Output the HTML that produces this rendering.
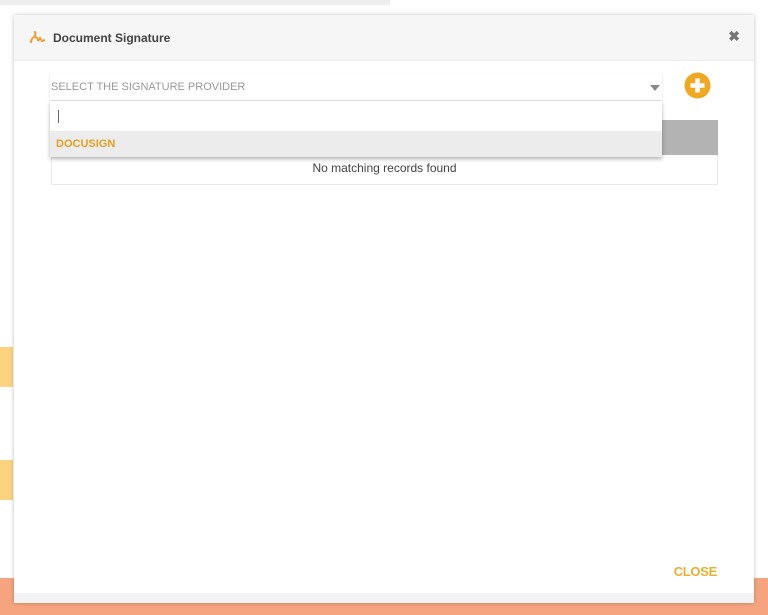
<!DOCTYPE html>
<html><head><style>
body{margin:0;width:768px;height:615px;position:relative;overflow:hidden;background:#fff;font-family:"Liberation Sans",sans-serif}
.bg1{position:absolute;left:0;top:0;width:390px;height:5px;background:#eee}
.band{position:absolute;left:0;top:578px;width:768px;height:37px;background:#f6a47f}
.y1{position:absolute;left:0;top:347px;width:13px;height:40px;background:#fbd27e}
.y2{position:absolute;left:0;top:460px;width:13px;height:40px;background:#fbd27e}
.modal{position:absolute;left:14px;top:15px;width:740px;height:588px;background:#fff;box-shadow:0 0 4px rgba(0,0,0,.25);border-radius:2px}
.hdr{height:45px;background:#f6f6f6;border-bottom:1px solid #eee;position:relative}
.hdr .t{position:absolute;left:39px;top:16px;font-size:12px;font-weight:bold;color:#444}
.hdr .x{position:absolute;right:14px;top:13px;font-size:14px;font-weight:bold;color:#777}
.foot{position:absolute;left:0;bottom:0;width:740px;height:10px;background:#f2f2f2}
.sel{position:absolute;left:36px;top:58px;width:612px;height:27px;background:#fff;box-shadow:0 1px 2px rgba(0,0,0,.15)}
.sel span{position:absolute;left:1px;top:8px;font-size:11px;color:#999}
.arr{position:absolute;right:2px;top:12px;width:0;height:0;border-left:5px solid transparent;border-right:5px solid transparent;border-top:6px solid #888}
.dd{position:absolute;left:36px;top:86px;width:612px;height:56px;background:#fff;box-shadow:0 2px 4px rgba(0,0,0,.3);z-index:2}
.dd .cur{position:absolute;left:8px;top:9px;width:1px;height:13px;background:#666}
.dd .opt{position:absolute;left:0;top:30px;width:612px;height:26px;background:#ececec;color:#e8a020;font-size:11px;font-weight:bold}
.dd .opt span{position:absolute;left:6px;top:7px}
.gray{position:absolute;left:640px;top:105px;width:64px;height:35px;background:#b3b3b3}
.tbl{position:absolute;left:37px;top:140px;width:665px;height:29px;border:1px solid #e8e8e8;border-top:none;text-align:center;font-size:12px;color:#444;line-height:27px}
.plus{position:absolute;left:670px;top:57px}
.close{position:absolute;right:37px;top:549px;color:#e8b030;font-size:13px;font-weight:bold;letter-spacing:-0.3px}
</style></head><body>
<div class="bg1"></div><div class="band"></div><div class="y1"></div><div class="y2"></div>
<div class="modal">
<div class="hdr">
<svg style="position:absolute;left:16px;top:16px" width="16" height="13" viewBox="0 0 16 13"><path d="M4 1c2 0 2 3 0 4M1 12c0-4 2-6 4-6s3 2 3 4M8 10l2-3 2 3 3-1" stroke="#f0a030" stroke-width="2" fill="none"/></svg>
<div class="t">Document Signature</div><div class="x">✖</div></div>
<div class="sel"><span>SELECT THE SIGNATURE PROVIDER</span><div class="arr"></div></div>
<div class="dd"><div class="cur"></div><div class="opt"><span>DOCUSIGN</span></div></div>
<div class="gray"></div>
<div class="tbl">No matching records found</div>
<svg class="plus" width="27" height="27" viewBox="0 0 27 27"><circle cx="13.5" cy="13.5" r="13" fill="#f0a820"/><path d="M13.5 6.5v14M6.5 13.5h14" stroke="#fff" stroke-width="4.5"/></svg>
<div class="close">CLOSE</div>
<div class="foot"></div>
</div>
</body></html>
